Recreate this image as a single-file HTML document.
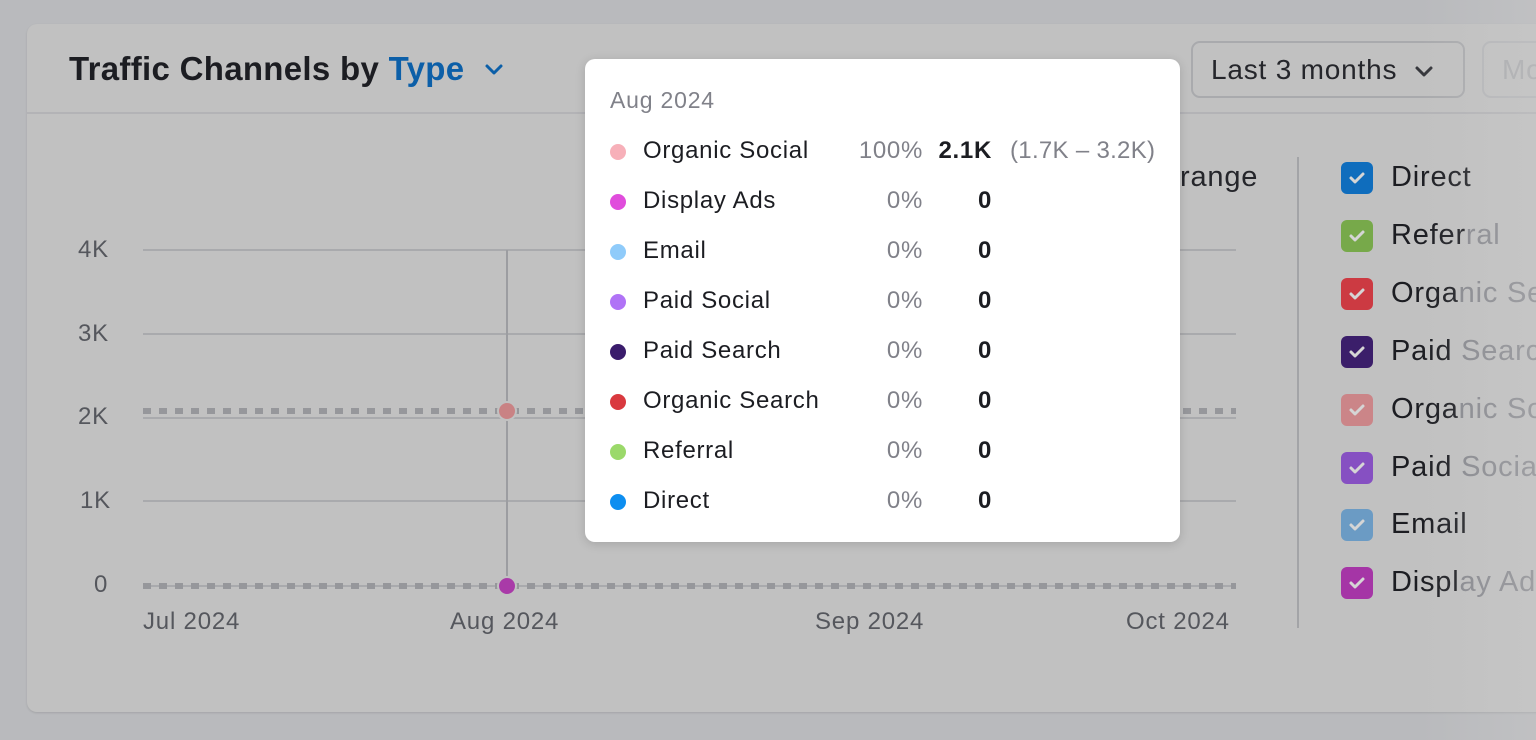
<!DOCTYPE html>
<html><head><meta charset="utf-8"><style>
*{margin:0;padding:0;box-sizing:border-box}
body{width:1536px;height:740px;background:#b9babd;font-family:"Liberation Sans",sans-serif;position:relative;overflow:hidden;color:#1c1d22}
.card{position:absolute;left:27px;top:24px;width:1540px;height:688px;background:#c1c1c1;border-radius:10px;box-shadow:0 1px 2px rgba(0,0,0,.12)}
.hdr{position:absolute;left:27px;top:112px;width:1540px;height:2px;background:#b3b3b6}
.t{position:absolute;left:69px;top:50px;font-size:33px;font-weight:bold;letter-spacing:0.3px;white-space:nowrap}
.t span{color:#0c5fa8}
.btn{position:absolute;top:41px;height:57px;border:2px solid #a9aaad;border-radius:9px;font-size:28px;padding:11px 18px;color:#25262b;letter-spacing:0.8px;white-space:nowrap;overflow:hidden}
.ab{position:absolute;font-size:24px;color:#55575d;letter-spacing:0.8px;white-space:nowrap}
.tt{position:absolute;left:585px;top:59px;width:595px;height:483px;background:#fff;border-radius:10px;box-shadow:0 2px 10px rgba(0,0,0,.15)}
.row{position:absolute;left:0;width:595px;height:30px;font-size:24px;letter-spacing:0.7px;white-space:nowrap}
.row .d{position:absolute;left:25px;top:9px;width:16px;height:16px;border-radius:50%}
.row .n{position:absolute;left:58px;top:2px}
.row .p{position:absolute;right:257px;top:2px;color:#808189}
.row .v{position:absolute;right:188px;top:2px;font-weight:bold}
.row .r{position:absolute;left:425px;top:2px;color:#808189;letter-spacing:0.3px}
.lg{position:absolute;left:1341px;width:250px;height:34px;font-size:29px;letter-spacing:0.8px;white-space:nowrap}
.lg .c{position:absolute;left:0;top:0;width:32px;height:32px;border-radius:6px}
.lg .c svg{position:absolute;left:6px;top:6px}
.lg .l{position:absolute;left:50px;top:-1px}
.lg .l span{color:#85868c}
.fade{position:absolute;left:1420px;top:0;width:116px;height:740px;background:linear-gradient(90deg,rgba(200,200,200,0),rgba(205,205,205,.35))}
</style></head><body>
<div class="card"></div>
<div class="hdr"></div>
<div class="t">Traffic Channels by <span>Type</span>
<svg width="24" height="20" viewBox="0 0 24 20" style="margin-left:8px"><path d="M5 6l7 7 7-7" fill="none" stroke="#0c5fa8" stroke-width="3" stroke-linecap="round" stroke-linejoin="round"/></svg></div>
<div class="btn" style="left:1191px;width:274px">Last 3 months
<svg width="24" height="20" viewBox="0 0 24 20" style="margin-left:6px;vertical-align:middle"><path d="M5 6l7 7 7-7" fill="none" stroke="#36373c" stroke-width="3" stroke-linecap="round" stroke-linejoin="round"/></svg></div>
<div class="btn" style="left:1482px;width:120px;color:#a9aaad;border-color:#b4b5b8">Mo</div>
<div class="ab" style="left:1180px;top:161px;font-size:29px;color:#25262b">range</div>
<svg style="position:absolute;left:0;top:0" width="1536" height="740">
<g stroke="#a9aaad" stroke-width="2">
<line x1="143" y1="250" x2="1236" y2="250"/><line x1="143" y1="334" x2="1236" y2="334"/><line x1="143" y1="418" x2="1236" y2="418"/><line x1="143" y1="501" x2="1236" y2="501"/><line x1="143" y1="586" x2="1236" y2="586"/>
<line x1="507" y1="250" x2="507" y2="585" stroke="#9c9da1"/>
<line x1="1298" y1="157" x2="1298" y2="628" stroke="#a3a4a7"/>
</g>
<g stroke="#96979b" stroke-width="6" stroke-dasharray="8 8">
<line x1="143" y1="411" x2="1236" y2="411"/><line x1="143" y1="586" x2="1236" y2="586"/>
</g>
<circle cx="507" cy="411" r="9" fill="#c98284" stroke="#c1c1c1" stroke-width="2"/>
<circle cx="507" cy="586" r="9" fill="#a93aa8" stroke="#c1c1c1" stroke-width="2"/>
</svg>
<div class="ab" style="left:78px;top:236px">4K</div>
<div class="ab" style="left:78px;top:320px">3K</div>
<div class="ab" style="left:78px;top:403px">2K</div>
<div class="ab" style="left:80px;top:487px">1K</div>
<div class="ab" style="left:94px;top:571px">0</div>
<div class="ab" style="left:143px;top:608px">Jul 2024</div>
<div class="ab" style="left:450px;top:608px">Aug 2024</div>
<div class="ab" style="left:815px;top:608px">Sep 2024</div>
<div class="ab" style="left:1126px;top:608px">Oct 2024</div>
<div class="tt">
<div style="position:absolute;left:25px;top:28px;font-size:23px;color:#808189;letter-spacing:0.8px">Aug 2024</div>
<div class="row" style="top:76px"><i class="d" style="background:#f7b0b9"></i><span class="n">Organic Social</span><span class="p">100%</span><span class="v">2.1K</span><span class="r">(1.7K – 3.2K)</span></div>
<div class="row" style="top:126px"><i class="d" style="background:#e04ddc"></i><span class="n">Display Ads</span><span class="p">0%</span><span class="v">0</span></div>
<div class="row" style="top:176px"><i class="d" style="background:#8fcbfa"></i><span class="n">Email</span><span class="p">0%</span><span class="v">0</span></div>
<div class="row" style="top:226px"><i class="d" style="background:#b073f6"></i><span class="n">Paid Social</span><span class="p">0%</span><span class="v">0</span></div>
<div class="row" style="top:276px"><i class="d" style="background:#3a1c6c"></i><span class="n">Paid Search</span><span class="p">0%</span><span class="v">0</span></div>
<div class="row" style="top:326px"><i class="d" style="background:#d9393f"></i><span class="n">Organic Search</span><span class="p">0%</span><span class="v">0</span></div>
<div class="row" style="top:376px"><i class="d" style="background:#9bd96a"></i><span class="n">Referral</span><span class="p">0%</span><span class="v">0</span></div>
<div class="row" style="top:426px"><i class="d" style="background:#0d8ef0"></i><span class="n">Direct</span><span class="p">0%</span><span class="v">0</span></div>
</div>
<div class="lg" style="top:162px"><i class="c" style="background:#0f6dbd"><svg width="20" height="20"><path d="M4 10l4 4 8-8" fill="none" stroke="#d5d5d5" stroke-width="3" stroke-linecap="round" stroke-linejoin="round"/></svg></i><span class="l">Direct</span></div>
<div class="lg" style="top:220px"><i class="c" style="background:#77a94a"><svg width="20" height="20"><path d="M4 10l4 4 8-8" fill="none" stroke="#d5d5d5" stroke-width="3" stroke-linecap="round" stroke-linejoin="round"/></svg></i><span class="l">Refer<span>ral</span></span></div>
<div class="lg" style="top:278px"><i class="c" style="background:#cc3a42"><svg width="20" height="20"><path d="M4 10l4 4 8-8" fill="none" stroke="#d5d5d5" stroke-width="3" stroke-linecap="round" stroke-linejoin="round"/></svg></i><span class="l">Orga<span>nic Se</span></span></div>
<div class="lg" style="top:336px"><i class="c" style="background:#3b1e6a"><svg width="20" height="20"><path d="M4 10l4 4 8-8" fill="none" stroke="#d5d5d5" stroke-width="3" stroke-linecap="round" stroke-linejoin="round"/></svg></i><span class="l">Paid <span>Searc</span></span></div>
<div class="lg" style="top:394px"><i class="c" style="background:#cb8588"><svg width="20" height="20"><path d="M4 10l4 4 8-8" fill="none" stroke="#d5d5d5" stroke-width="3" stroke-linecap="round" stroke-linejoin="round"/></svg></i><span class="l">Orga<span>nic So</span></span></div>
<div class="lg" style="top:452px"><i class="c" style="background:#8650c2"><svg width="20" height="20"><path d="M4 10l4 4 8-8" fill="none" stroke="#d5d5d5" stroke-width="3" stroke-linecap="round" stroke-linejoin="round"/></svg></i><span class="l">Paid <span>Socia</span></span></div>
<div class="lg" style="top:509px"><i class="c" style="background:#6b9bc4"><svg width="20" height="20"><path d="M4 10l4 4 8-8" fill="none" stroke="#d5d5d5" stroke-width="3" stroke-linecap="round" stroke-linejoin="round"/></svg></i><span class="l">Email</span></div>
<div class="lg" style="top:567px"><i class="c" style="background:#a535a6"><svg width="20" height="20"><path d="M4 10l4 4 8-8" fill="none" stroke="#d5d5d5" stroke-width="3" stroke-linecap="round" stroke-linejoin="round"/></svg></i><span class="l">Displ<span>ay Ad</span></span></div>
<div class="fade"></div>
</body></html>
